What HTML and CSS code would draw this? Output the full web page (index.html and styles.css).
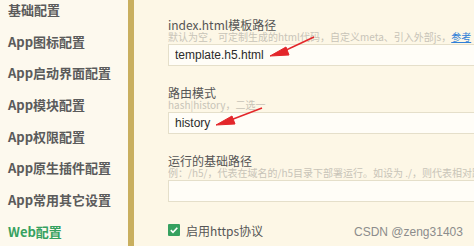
FILE: index.html
```html
<!DOCTYPE html>
<html lang="zh-CN">
<head>
  <meta charset="UTF-8">
  <title>manifest.json - Web配置</title>
  <link rel="stylesheet" href="styles.css">
</head>
<body>

<div class="app">
  <nav class="side">
    <a class="item">基础配置</a>
    <a class="item">App图标配置</a>
    <a class="item">App启动界面配置</a>
    <a class="item">App模块配置</a>
    <a class="item">App权限配置</a>
    <a class="item">App原生插件配置</a>
    <a class="item">App常用其它设置</a>
    <a class="item active">Web配置</a>
  </nav>
  <div class="split"></div>

  <main class="panel">
    <div class="field">
      <label>index.html模板路径</label>
      <p class="hint">默认为空，可定制生成的html代码，自定义meta、引入外部js，<a>参考</a></p>
      <input type="text" value="template.h5.html">
    </div>
    <div class="field">
      <label>路由模式</label>
      <p class="hint">hash|history，二选一</p>
      <input type="text" value="history">
    </div>
    <div class="field">
      <label>运行的基础路径</label>
      <p class="hint">例：/h5/，代表在域名的/h5目录下部署运行。如设为 ./，则代表相对路径</p>
      <input type="text" value="">
    </div>
    <div class="check">
      <span class="box">
        <svg width="12" height="12" viewBox="0 0 12 12"><path d="M2.8 6.2 L5 8.3 L9.3 3.8" fill="none" stroke="#fff" stroke-width="1.6"/></svg>
      </span>
      启用https协议
    </div>
  </main>
</div>

<!-- annotation arrows drawn over the screenshot -->
<svg class="marks" width="474" height="246" viewBox="0 0 474 246">
  <g fill="#e3262a" stroke="#e3262a">
    <line x1="314" y1="37" x2="282" y2="52" stroke-width="1.5"/>
    <polygon points="270,56 286,47 289,55" stroke-width="1"/>
    <line x1="262" y1="108" x2="228" y2="121" stroke-width="1.5"/>
    <polygon points="216,125 232,116 235,124" stroke-width="1"/>
  </g>
</svg>

<div class="wm">CSDN @zeng31403</div>

</body>
</html>
```

FILE: styles.css
```css
* {margin:0;padding:0;box-sizing:border-box}
body {
  width:474px;
  height:246px;
  overflow:hidden;
  position:relative;
  background:#fdf7e6;
  font-family:"Microsoft YaHei","Noto Sans CJK SC",sans-serif;
}
.app {display:flex;height:246px;}

.side {
  width:128px;
  background:#fdf9ee;
  display:flex;
  flex-direction:column;
  margin-top:-6px;
}
.side .item {
  display:block;
  height:31.7px;
  line-height:31.7px;
  padding-left:8px;
  font-size:13px;
  font-weight:bold;
  color:#5b5b5b;
  white-space:nowrap;
}
.side .item.active {color:#36a160;}
.split {width:6px;background:#c9af5f;}

.panel {
  flex:1;
  padding:18px 0 0 34px;
  overflow:hidden;
  white-space:nowrap;
}
.field {margin-bottom:20px;}
.field label {
  display:block;
  font-size:12px;
  line-height:13px;
  color:#555;
}
.hint {
  font-size:10px;
  line-height:12px;
  margin-bottom:1px;
  color:#c8c4b8;
}
.hint a {color:#2f7fd8;text-decoration:underline;}
.field input {
  display:block;
  width:420px;
  height:22px;
  padding:0 6px;
  border:1px solid #e5dfca;
  background:#fffdf7;
  font-family:"Liberation Sans","Noto Sans CJK SC",sans-serif;
  font-size:12px;
  color:#2b2b2b;
  outline:none;
}
.check {
  display:flex;
  align-items:center;
  gap:6px;
  height:16px;
  font-size:12px;
  color:#555;
}
.box {
  width:12px;height:12px;
  background:#36a160;
  border-radius:1px;
  display:flex;
}

.marks {position:absolute;left:0;top:0;}
.wm {
  position:absolute;
  left:354px;
  top:225px;
  font-family:"Liberation Sans",sans-serif;
  font-size:12px;
  color:#8c8c8c;
}
```
